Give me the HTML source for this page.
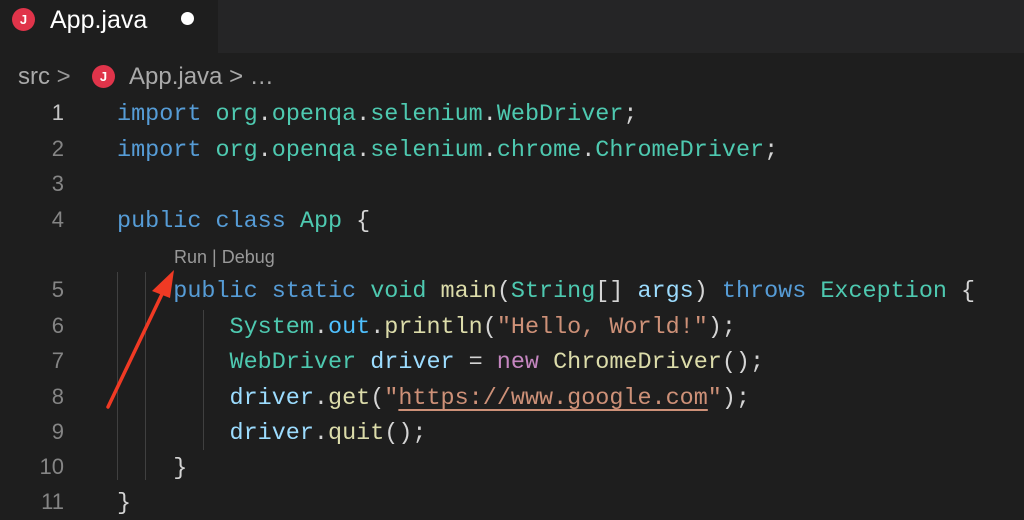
<!DOCTYPE html>
<html><head><style>
body{margin:0;width:1024px;height:520px;background:#1e1e1e;overflow:hidden;position:relative;font-family:"Liberation Sans",sans-serif}
.tabbar{position:absolute;left:0;top:0;width:1024px;height:53px;background:#252526}
.tab{position:absolute;left:0;top:0;width:218px;height:53px;background:#1e1e1e}
.j{position:absolute;width:23px;height:23px;border-radius:50%;background:#e0344a;color:#fff;font:bold 13px "Liberation Sans",sans-serif;text-align:center;line-height:23px}
.t{position:absolute;color:#fff;font-size:25px}
.ln{position:absolute;width:64px;text-align:right;color:#858585;font-family:"Liberation Sans",sans-serif;font-size:22px}
.l{position:absolute;left:117px;color:#d4d4d4;font-family:"Liberation Mono",monospace;font-size:23.45px;white-space:pre}
.k{color:#569cd6}.ty{color:#4ec9b0}.f{color:#dcdcaa}.v{color:#9cdcfe}.s{color:#ce9178}.n{color:#c586c0}
.g{position:absolute;width:1px;background:#404040}
</style></head><body>
<div class="tabbar"><div class="tab"></div></div>
<div class="j" style="left:12px;top:8px">J</div>
<div class="t" style="left:50px;top:6px">App.java</div>
<div style="position:absolute;left:181px;top:12px;width:13px;height:13px;border-radius:50%;background:#fff"></div>
<div class="t" style="left:18px;top:63px;color:#a9a9a9;font-size:24px">src <span style="color:#999">&gt;</span></div>
<div class="j" style="left:92px;top:65px">J</div>
<div class="t" style="left:129px;top:63px;color:#a9a9a9;font-size:24px">App.java &gt; …</div>

<div class="g" style="left:117px;top:272px;height:208px"></div>
<div class="g" style="left:145px;top:272px;height:208px"></div>
<div class="g" style="left:203px;top:310px;height:140px"></div>

<div class="ln" style="top:100px;color:#c6c6c6">1</div>
<div class="ln" style="top:136px">2</div>
<div class="ln" style="top:171px">3</div>
<div class="ln" style="top:207px">4</div>
<div class="ln" style="top:277px">5</div>
<div class="ln" style="top:313px">6</div>
<div class="ln" style="top:348px">7</div>
<div class="ln" style="top:384px">8</div>
<div class="ln" style="top:419px">9</div>
<div class="ln" style="top:454px">10</div>
<div class="ln" style="top:489px">11</div>

<div class="l" style="top:101px"><span class="k">import</span> <span class="ty">org</span>.<span class="ty">openqa</span>.<span class="ty">selenium</span>.<span class="ty">WebDriver</span>;</div>
<div class="l" style="top:137px"><span class="k">import</span> <span class="ty">org</span>.<span class="ty">openqa</span>.<span class="ty">selenium</span>.<span class="ty">chrome</span>.<span class="ty">ChromeDriver</span>;</div>
<div class="l" style="top:208px"><span class="k">public</span> <span class="k">class</span> <span class="ty">App</span> {</div>
<div style="position:absolute;left:174px;top:247px;color:#999;font-size:18px">Run | Debug</div>
<div class="l" style="top:278px">    <span class="k">public</span> <span class="k">static</span> <span class="ty">void</span> <span class="f">main</span>(<span class="ty">String</span>[] <span class="v">args</span>) <span class="k">throws</span> <span class="ty">Exception</span> {</div>
<div class="l" style="top:314px">        <span class="ty">System</span>.<span class="v" style="color:#4fc1ff">out</span>.<span class="f">println</span>(<span class="s">"Hello, World!"</span>);</div>
<div class="l" style="top:349px">        <span class="ty">WebDriver</span> <span class="v">driver</span> = <span class="n">new</span> <span class="f">ChromeDriver</span>();</div>
<div class="l" style="top:385px">        <span class="v">driver</span>.<span class="f">get</span>(<span class="s">"<span style="text-decoration:underline;text-underline-offset:5px">https://www.google.com</span>"</span>);</div>
<div class="l" style="top:420px">        <span class="v">driver</span>.<span class="f">quit</span>();</div>
<div class="l" style="top:455px">    }</div>
<div class="l" style="top:490px">}</div>

<svg style="position:absolute;left:0;top:0" width="1024" height="520">
<line x1="108" y1="407" x2="163" y2="292" stroke="#f03a24" stroke-width="3.5" stroke-linecap="round"/>
<polygon points="174,270 152,291 170,298" fill="#f03a24"/>
</svg>
</body></html>
